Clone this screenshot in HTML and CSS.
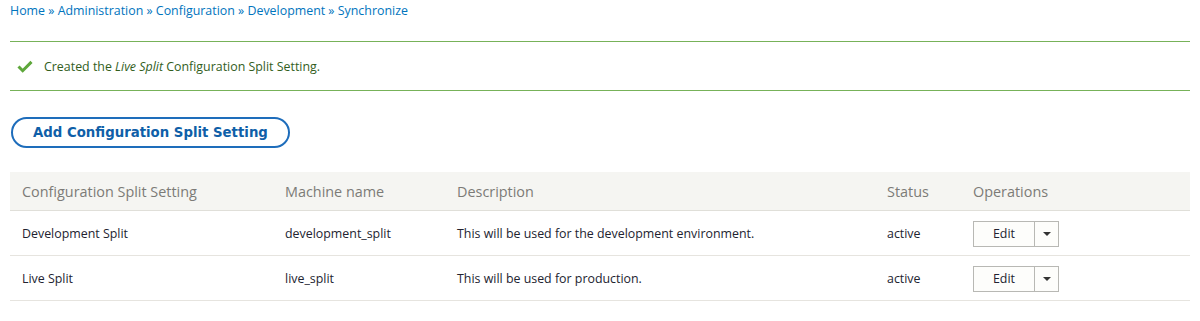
FILE: index.html
```html
<!DOCTYPE html>
<html lang="en">
<head>
    <meta charset="UTF-8">
    <title>Synchronize</title>
    <link rel="stylesheet" href="styles.css">
</head>
<body>
    <nav class="breadcrumb">
        <a href="#">Home</a> &raquo; <a href="#">Administration</a> &raquo; <a href="#">Configuration</a> &raquo; <a href="#">Development</a> &raquo; <a href="#">Synchronize</a>
    </nav>

    <div class="messages status">
        <svg class="check" viewBox="0 0 16 16">
            <path d="M1.5 8.5l4.2 4.2 8.8-8.8" />
        </svg>
        <span>Created the <em>Live Split</em> Configuration Split Setting.</span>
    </div>

    <div class="actions">
        <a href="#" class="button-action">Add Configuration Split Setting</a>
    </div>

    <table class="split-table">
        <thead>
            <tr>
                <th class="col-label">Configuration Split Setting</th>
                <th class="col-machine">Machine name</th>
                <th class="col-desc">Description</th>
                <th class="col-status">Status</th>
                <th class="col-ops">Operations</th>
            </tr>
        </thead>
        <tbody>
            <tr>
                <td>Development Split</td>
                <td>development_split</td>
                <td>This will be used for the development environment.</td>
                <td>active</td>
                <td>
                    <div class="dropbutton">
                        <a href="#" class="dropbutton-main">Edit</a>
                        <span class="dropbutton-toggle"><span class="arrow"></span></span>
                    </div>
                </td>
            </tr>
            <tr>
                <td>Live Split</td>
                <td>live_split</td>
                <td>This will be used for production.</td>
                <td>active</td>
                <td>
                    <div class="dropbutton">
                        <a href="#" class="dropbutton-main">Edit</a>
                        <span class="dropbutton-toggle"><span class="arrow"></span></span>
                    </div>
                </td>
            </tr>
        </tbody>
    </table>
</body>
</html>
```

FILE: styles.css
```css
* {
    box-sizing: border-box;
}

body {
    margin: 0;
    padding: 0 10px;
    background: #ffffff;
    color: #222330;
    font-family: "Open Sans", sans-serif;
    font-size: 12.4px;
}

a {
    color: #0074bd;
    text-decoration: none;
}

.breadcrumb {
    padding-top: 1px;
    line-height: 20px;
    color: #0074bd;
}

.messages {
    display: flex;
    align-items: center;
    margin-top: 20px;
    height: 50px;
    border-top: 1px solid #77b259;
    border-bottom: 1px solid #77b259;
    color: #325e1c;
    padding-left: 7px;
}

.check {
    width: 16px;
    height: 16px;
    margin-right: 11px;
    fill: none;
    stroke: #5ea73b;
    stroke-width: 3;
}

.actions {
    margin-top: 26px;
}

.button-action {
    display: inline-block;
    margin-left: 1px;
    padding: 0 20px;
    height: 31px;
    line-height: 27px;
    border: 2px solid #1e6dbb;
    border-radius: 20px;
    color: #0f5fa8;
    font-family: "DejaVu Sans", sans-serif;
    font-weight: bold;
    font-size: 13.3px;
}

.split-table {
    width: 100%;
    margin-top: 24px;
    border-collapse: collapse;
}

.split-table th {
    height: 38px;
    background: #f5f5f2;
    border-bottom: 1px solid #e0dfd9;
    color: #7c7b77;
    font-weight: normal;
    font-size: 14.4px;
    text-align: left;
    padding: 1px 12px 0;
}

.split-table td {
    height: 45px;
    border-bottom: 1px solid #e6e4df;
    padding: 2px 12px 0;
}

.col-label { width: 263px; }
.col-machine { width: 172px; }
.col-desc { width: 430px; }
.col-status { width: 86px; }

.dropbutton {
    display: inline-flex;
    height: 26px;
    border: 1px solid #b8b8b4;
    background: #fdfdfb;
}

.dropbutton-main {
    width: 61px;
    line-height: 24px;
    text-align: center;
    color: #222330;
    border-right: 1px solid #b8b8b4;
}

.dropbutton-toggle {
    width: 23px;
    display: flex;
    align-items: center;
    justify-content: center;
}

.arrow {
    width: 0;
    height: 0;
    border-left: 4px solid transparent;
    border-right: 4px solid transparent;
    border-top: 4px solid #333;
}
```
